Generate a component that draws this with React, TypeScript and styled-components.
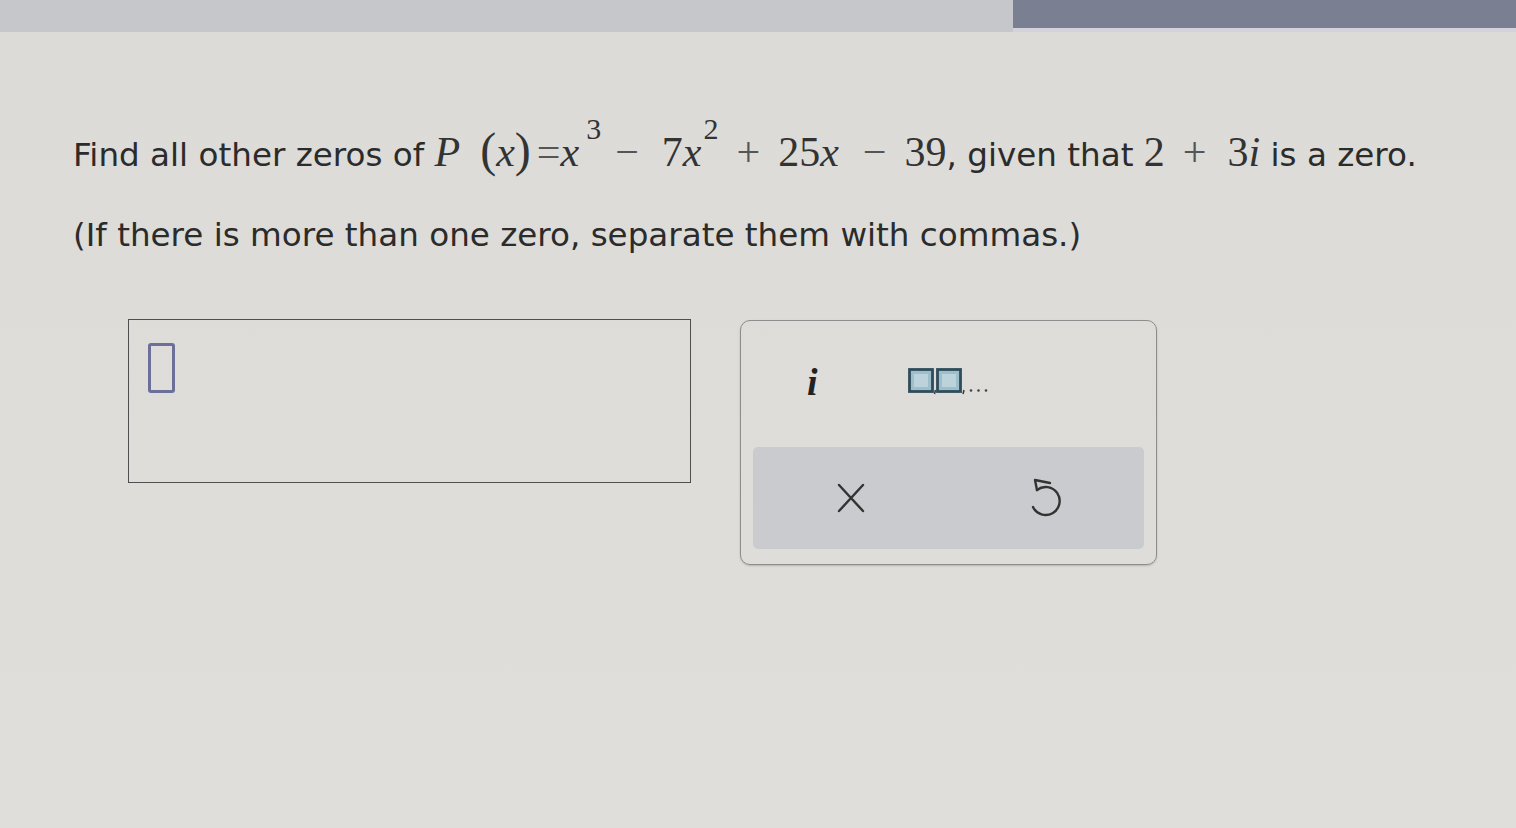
import React from "react";
import styled, { createGlobalStyle } from "styled-components";

const Global = createGlobalStyle`
  html, body {
    margin: 0;
    padding: 0;
    background: #dddcd8;
  }
  body {
    width: 1516px;
    height: 828px;
    overflow: hidden;
    font-family: "DejaVu Sans", Verdana, sans-serif;
    color: #2b2b2b;
  }
`;

const Page = styled.div`
  width: 1516px;
  height: 828px;
  display: flex;
  flex-direction: column;
  background: linear-gradient(180deg, #dcdbd7 0%, #dfdedb 100%);
`;

const TopBar = styled.div`
  height: 32px;
  display: flex;
  background: #c6c7cb;
`;

const TopTab = styled.div`
  margin-left: auto;
  width: 503px;
  height: 28px;
  background: #7b7f92;
  border-bottom: 4px solid #d3d4db;
`;

const Content = styled.div`
  padding-left: 73px;
  display: flex;
  flex-direction: column;
`;

const Line = styled.p<{ $top: number }>`
  margin: ${(p) => p.$top}px 0 0 0;
  height: 48px;
  line-height: 48px;
  font-size: 32.6px;
  white-space: nowrap;
  color: #2b2b2b;
`;

const Var = styled.span`
  font-family: "Liberation Serif", "Times New Roman", serif;
  font-style: italic;
  font-size: 42px;
  line-height: 0;
  color: #333;
`;

const Num = styled.span`
  font-family: "Liberation Serif", "Times New Roman", serif;
  font-size: 42px;
  line-height: 0;
  color: #333;
`;

const Op = styled.span<{ $l?: number; $r?: number }>`
  font-family: "Liberation Serif", "Times New Roman", serif;
  font-size: 42px;
  line-height: 0;
  color: #555;
  margin: 0 ${(p) => p.$r ?? 20}px 0 ${(p) => p.$l ?? 20}px;
`;

const Paren = styled.span<{ $l?: number }>`
  font-family: "Liberation Serif", "Times New Roman", serif;
  font-size: 48px;
  line-height: 0;
  color: #333;
  margin-left: ${(p) => p.$l ?? 0}px;
`;

const Sup = styled.span<{ $l?: number }>`
  font-family: "Liberation Serif", "Times New Roman", serif;
  font-size: 30px;
  line-height: 0;
  vertical-align: 27px;
  margin-left: ${(p) => p.$l ?? 6}px;
  color: #333;
`;

const Row = styled.div`
  margin-top: 60px;
  margin-left: 55px;
  display: flex;
  align-items: flex-start;
  gap: 49px;
`;

const AnswerBox = styled.div`
  box-sizing: border-box;
  width: 563px;
  height: 164px;
  border: 1.5px solid #4e4e4e;
  padding: 23px 19px;
`;

const Cursor = styled.div`
  box-sizing: border-box;
  width: 27px;
  height: 50px;
  border: 3px solid #6c6f99;
  border-radius: 3px;
`;

const Keypad = styled.div`
  box-sizing: border-box;
  margin-top: 1px;
  width: 417px;
  height: 245px;
  border: 1px solid #8d8d8d;
  border-radius: 10px;
  padding: 12px 12px 14px 12px;
  display: grid;
  grid-template-rows: 98px 102px;
  row-gap: 16px;
  box-shadow: 0 1px 2px rgba(0, 0, 0, 0.18);
`;

const KeyRow = styled.div`
  display: grid;
  grid-template-columns: repeat(3, 1fr);
  align-items: center;
  justify-items: center;
`;

const KeyI = styled.span`
  font-family: "Liberation Serif", "Times New Roman", serif;
  font-style: italic;
  font-weight: bold;
  font-size: 38px;
  color: #222;
  margin-right: 12px;
`;

const ListKey = styled.span`
  display: flex;
  margin-left: 10px;
`;

const ActionPanel = styled.div`
  background: #c9cbce;
  border-radius: 5px;
  display: grid;
  grid-template-columns: 1fr 1fr;
  align-items: center;
  justify-items: center;
`;

const ListIcon = () => (
  <svg width="90" height="30" viewBox="0 0 90 30">
    <rect x="1.5" y="2.5" width="23" height="22" fill="#9dbfcb" stroke="#2f4c5a" strokeWidth="2.8" />
    <rect x="6" y="7" width="14" height="13" fill="#bcd3dc" />
    <path d="M27.5 23 l-1 4" stroke="#2f3f48" strokeWidth="1.6" />
    <rect x="29.5" y="2.5" width="23" height="22" fill="#9dbfcb" stroke="#2f4c5a" strokeWidth="2.8" />
    <rect x="34" y="7" width="14" height="13" fill="#bcd3dc" />
    <path d="M56 23 l-1 4" stroke="#3a3a3a" strokeWidth="1.6" />
    <circle cx="63" cy="23.5" r="1.3" fill="#444" />
    <circle cx="70.5" cy="23.5" r="1.3" fill="#444" />
    <circle cx="78" cy="23.5" r="1.3" fill="#444" />
  </svg>
);

const ClearIcon = () => (
  <svg width="28" height="30" viewBox="0 0 28 30">
    <path d="M2 2 L26 28 M26 2 L2 28" stroke="#333" strokeWidth="2.4" strokeLinecap="round" />
  </svg>
);

const UndoIcon = () => (
  <svg width="34" height="40" viewBox="0 0 34 40">
    <path
      d="M8 12 A14 14 0 1 1 4 29"
      fill="none"
      stroke="#333"
      strokeWidth="2.4"
      strokeLinecap="round"
    />
    <path d="M21 5 L6 2 L8 12" fill="none" stroke="#333" strokeWidth="2.4" strokeLinecap="round" strokeLinejoin="round" />
  </svg>
);

export default function App() {
  return (
    <>
      <Global />
      <Page>
        <TopBar>
          <TopTab />
        </TopBar>
        <Content>
          <Line $top={97}>
            Find all other zeros of <Var>P</Var>
            <Paren $l={20}>(</Paren>
            <Var>x</Var>
            <Paren>)</Paren>
            <Op $l={6} $r={0}>=</Op>
            <Var>x</Var>
            <Sup $l={7}>3</Sup>
            <Op $l={14} $r={23}>−</Op>
            <Num>7</Num>
            <Var>x</Var>
            <Sup $l={2}>2</Sup>
            <Op $l={18} $r={18}>+</Op>
            <Num>25</Num>
            <Var>x</Var>
            <Op $l={24} $r={18}>−</Op>
            <Num>39</Num>, given that <Num>2</Num>
            <Op $l={18} $r={21}>+</Op>
            <Num>3</Num>
            <Var>i</Var> is a zero.
          </Line>
          <Line $top={34}>(If there is more than one zero, separate them with commas.)</Line>
          <Row>
            <AnswerBox>
              <Cursor />
            </AnswerBox>
            <Keypad>
              <KeyRow>
                <KeyI>i</KeyI>
                <ListKey>
                  <ListIcon />
                </ListKey>
                <span />
              </KeyRow>
              <ActionPanel>
                <ClearIcon />
                <UndoIcon />
              </ActionPanel>
            </Keypad>
          </Row>
        </Content>
      </Page>
    </>
  );
}
